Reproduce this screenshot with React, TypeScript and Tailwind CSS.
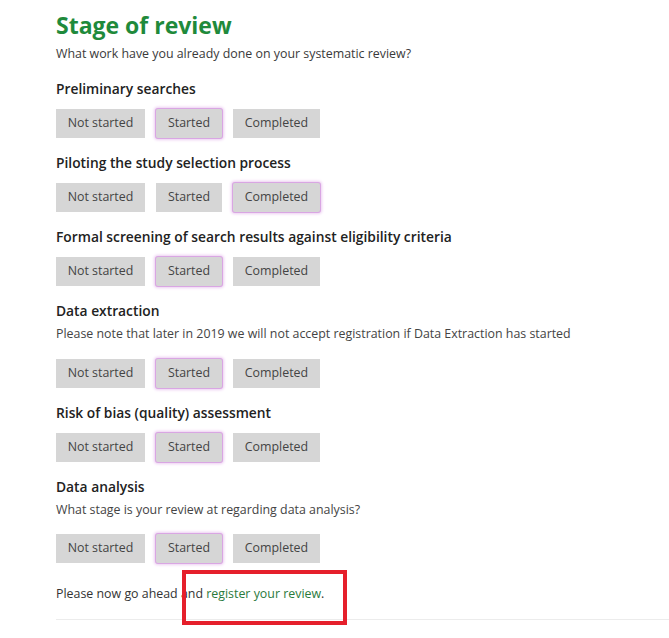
import React from "react";

type Q = { label: string; note?: string; selected: number; noteGap?: string };

const questions: Q[] = [
  { label: "Preliminary searches", selected: 1 },
  { label: "Piloting the study selection process", selected: 2 },
  { label: "Formal screening of search results against eligibility criteria", selected: 1 },
  {
    label: "Data extraction",
    note: "Please note that later in 2019 we will not accept registration if Data Extraction has started",
    selected: 1,
    noteGap: "mt-[16px]",
  },
  { label: "Risk of bias (quality) assessment", selected: 1 },
  {
    label: "Data analysis",
    note: "What stage is your review at regarding data analysis?",
    selected: 1,
    noteGap: "mt-[15px]",
  },
];

const opts = [
  { t: "Not started", w: "w-[89px]" },
  { t: "Started", w: "w-[66px]" },
  { t: "Completed", w: "w-[87px]" },
];

export default function App() {
  return (
    <div
      className="w-[669px] h-[638px] bg-white overflow-hidden text-[#333]"
      style={{ fontFamily: '"Open Sans", "Noto Sans", sans-serif' }}
    >
      <div className="pl-[56px] pt-[11px]">
        <h1 className="text-[23px] leading-[28px] font-bold text-[#1f8a3b]">Stage of review</h1>
        <p className="text-[12.4px] leading-[18px] mt-[6px] text-[#3a3a3a]">
          What work have you already done on your systematic review?
        </p>
        <div className="mt-[17px] flex flex-col gap-[16px]">
          {questions.map((q, i) => (
            <div key={i}>
              <div className="text-[13.8px] leading-[18px] font-semibold text-[#222]">{q.label}</div>
              {q.note && <div className="text-[12.4px] leading-[18px] mt-[5px] text-[#444]">{q.note}</div>}
              <div className={`flex gap-[11px] ${q.note ? q.noteGap : "mt-[11px]"}`}>
                {opts.map((o, j) => (
                  <div
                    key={j}
                    className={`${o.w} h-[29px] flex items-center justify-center bg-[#d6d6d6] text-[12.4px] text-[#444] ${
                      j === q.selected
                        ? "rounded-[2px] shadow-[0_0_0_1px_#d9a6e3,0_0_3px_2px_#ecccf1]"
                        : ""
                    }`}
                  >
                    {o.t}
                  </div>
                ))}
              </div>
            </div>
          ))}
        </div>
        <div className="relative mt-[22px] text-[12.4px] leading-[18px] text-[#333]">
          Please now go ahead and <span className="text-[#2a7a3c]">register your review</span>.
          <div className="absolute left-[126px] top-[-15px] w-[165px] h-[55px] border-[4px] border-[#e51f2b]" />
        </div>
        <div className="mt-[16px] border-t border-[#ececec]" />
      </div>
    </div>
  );
}
